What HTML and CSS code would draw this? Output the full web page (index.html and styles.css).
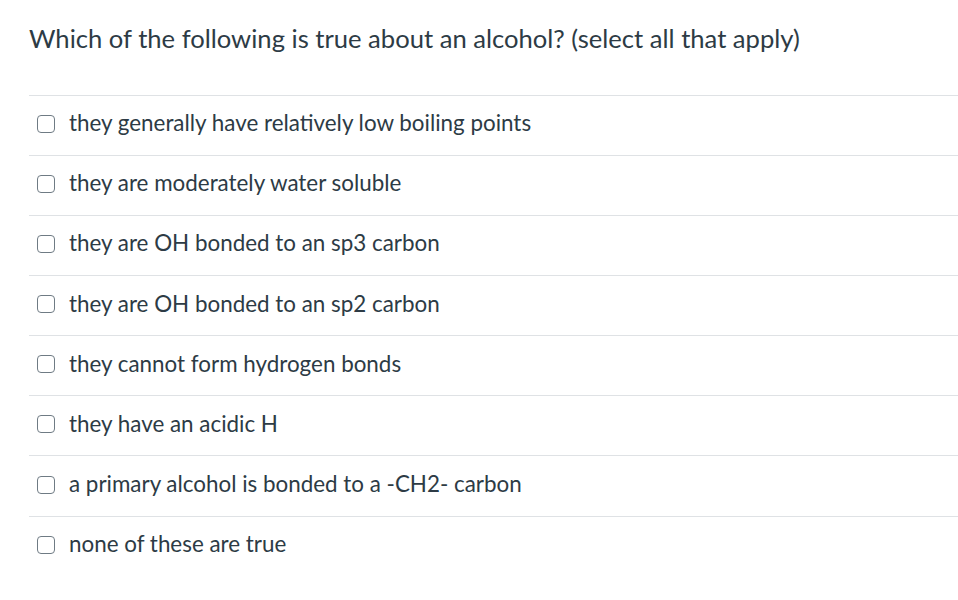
FILE: index.html
```html
<!DOCTYPE html>
<html>
<head>
<meta charset="utf-8">
<link rel="stylesheet" href="styles.css">
</head>
<body>
<div class="question">
  <div class="prompt">Which of the following is true about an alcohol? (select all that apply)</div>
  <div class="answers">
    <label class="answer"><span class="box"></span><span class="text">they generally have relatively low boiling points</span></label>
    <label class="answer"><span class="box"></span><span class="text">they are moderately water soluble</span></label>
    <label class="answer"><span class="box"></span><span class="text">they are OH bonded to an sp3 carbon</span></label>
    <label class="answer"><span class="box"></span><span class="text">they are OH bonded to an sp2 carbon</span></label>
    <label class="answer"><span class="box"></span><span class="text">they cannot form hydrogen bonds</span></label>
    <label class="answer"><span class="box"></span><span class="text">they have an acidic H</span></label>
    <label class="answer"><span class="box"></span><span class="text">a primary alcohol is bonded to a -CH2- carbon</span></label>
    <label class="answer last"><span class="box"></span><span class="text">none of these are true</span></label>
  </div>
</div>
</body>
</html>
```
FILE: styles.css
```css
html, body {
  margin: 0;
  padding: 0;
  background: #fff;
}
body {
  font-family: Lato, "Liberation Sans", sans-serif;
  color: #2d3b45;
}
.question {
  padding: 22px 0 0 29px;
}
.prompt {
  font-size: 25.6px;
  line-height: 32px;
  height: 72.6px;
}
.answers {
  display: flex;
  flex-direction: column;
}
.answer {
  display: flex;
  align-items: center;
  height: 60.15px;
  border-top: 1px solid #dfe2e5;
  padding-left: 8px;
  padding-bottom: 5px;
  box-sizing: border-box;
  font-size: 22.4px;
}
.box {
  width: 16px;
  height: 16px;
  border: 1.5px solid #6f7b84;
  border-radius: 4px;
  margin-right: 14px;
  margin-top: 2px;
  flex: none;
  box-sizing: content-box;
}
```
